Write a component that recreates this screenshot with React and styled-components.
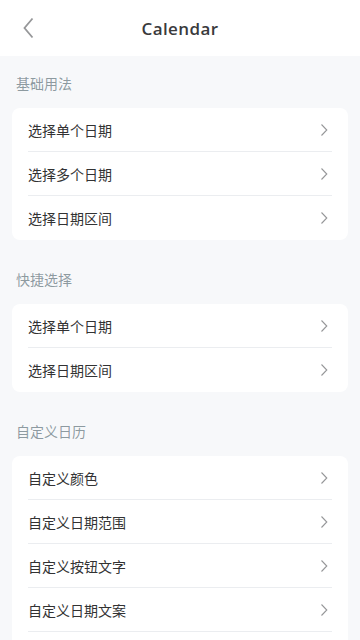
import React from "react"
import styled, { createGlobalStyle } from "styled-components"

const GlobalStyle = createGlobalStyle`
  html, body {
    margin: 0;
    padding: 0;
    background: #f7f8fa;
    font-family: "Open Sans", "Noto Sans CJK SC", sans-serif;
    -webkit-font-smoothing: antialiased;
  }
`

const sections = [
  { title: "基础用法", items: ["选择单个日期", "选择多个日期", "选择日期区间"] },
  { title: "快捷选择", items: ["选择单个日期", "选择日期区间"] },
  {
    title: "自定义日历",
    items: [
      "自定义颜色",
      "自定义日期范围",
      "自定义按钮文字",
      "自定义日期文案",
      "自定义弹出位置",
      "自定义可选天数",
    ],
  },
]

const Page = styled.div`
  min-height: 100vh;
  background: #f7f8fa;
`

const NavBar = styled.header`
  display: flex;
  align-items: center;
  justify-content: center;
  position: relative;
  height: 56px;
  background: #fff;
`

const BackButton = styled.button`
  position: absolute;
  left: 16px;
  top: 16px;
  width: 24px;
  height: 24px;
  padding: 0;
  border: 0;
  background: none;
  display: flex;
  align-items: center;
  justify-content: center;
`

const Title = styled.h1`
  margin: 0;
  font-size: 17px;
  font-weight: 600;
  color: #3a3a3c;
  letter-spacing: 0.4px;
`

const BlockTitle = styled.h2`
  margin: 0;
  padding: ${p => (p.first ? "20px" : "32px")} 16px 16px;
  font-size: 14px;
  line-height: 16px;
  font-weight: normal;
  color: rgba(69, 90, 100, 0.6);
`

const Card = styled.div`
  margin: 0 12px;
  background: #fff;
  border-radius: 8px;
  overflow: hidden;
`

const Cell = styled.div`
  display: flex;
  align-items: center;
  justify-content: space-between;
  height: 44px;
  margin: 0 16px;
  box-sizing: border-box;
  font-size: 14px;
  color: #323233;
  border-bottom: ${p => (p.last ? "none" : "1px solid #ebedf0")};
`

const Chevron = () => (
  <svg width="16" height="16" viewBox="0 0 16 16">
    <path d="M5.5 2.5 L10.8 8 L5.5 13.5" fill="none" stroke="#969799" strokeWidth="1.1" />
  </svg>
)

const BackIcon = () => (
  <svg width="24" height="24" viewBox="0 0 24 24">
    <path d="M16.5 2.5 L8.5 12 L16.5 21.5" fill="none" stroke="#969799" strokeWidth="1.8" />
  </svg>
)

export default function App() {
  return (
    <Page>
      <GlobalStyle />
      <NavBar>
        <BackButton>
          <BackIcon />
        </BackButton>
        <Title>Calendar</Title>
      </NavBar>
      {sections.map((s, i) => (
        <section key={s.title}>
          <BlockTitle first={i === 0}>{s.title}</BlockTitle>
          <Card>
            {s.items.map((item, j) => (
              <Cell key={item} last={j === s.items.length - 1}>
                {item}
                <Chevron />
              </Cell>
            ))}
          </Card>
        </section>
      ))}
    </Page>
  )
}
